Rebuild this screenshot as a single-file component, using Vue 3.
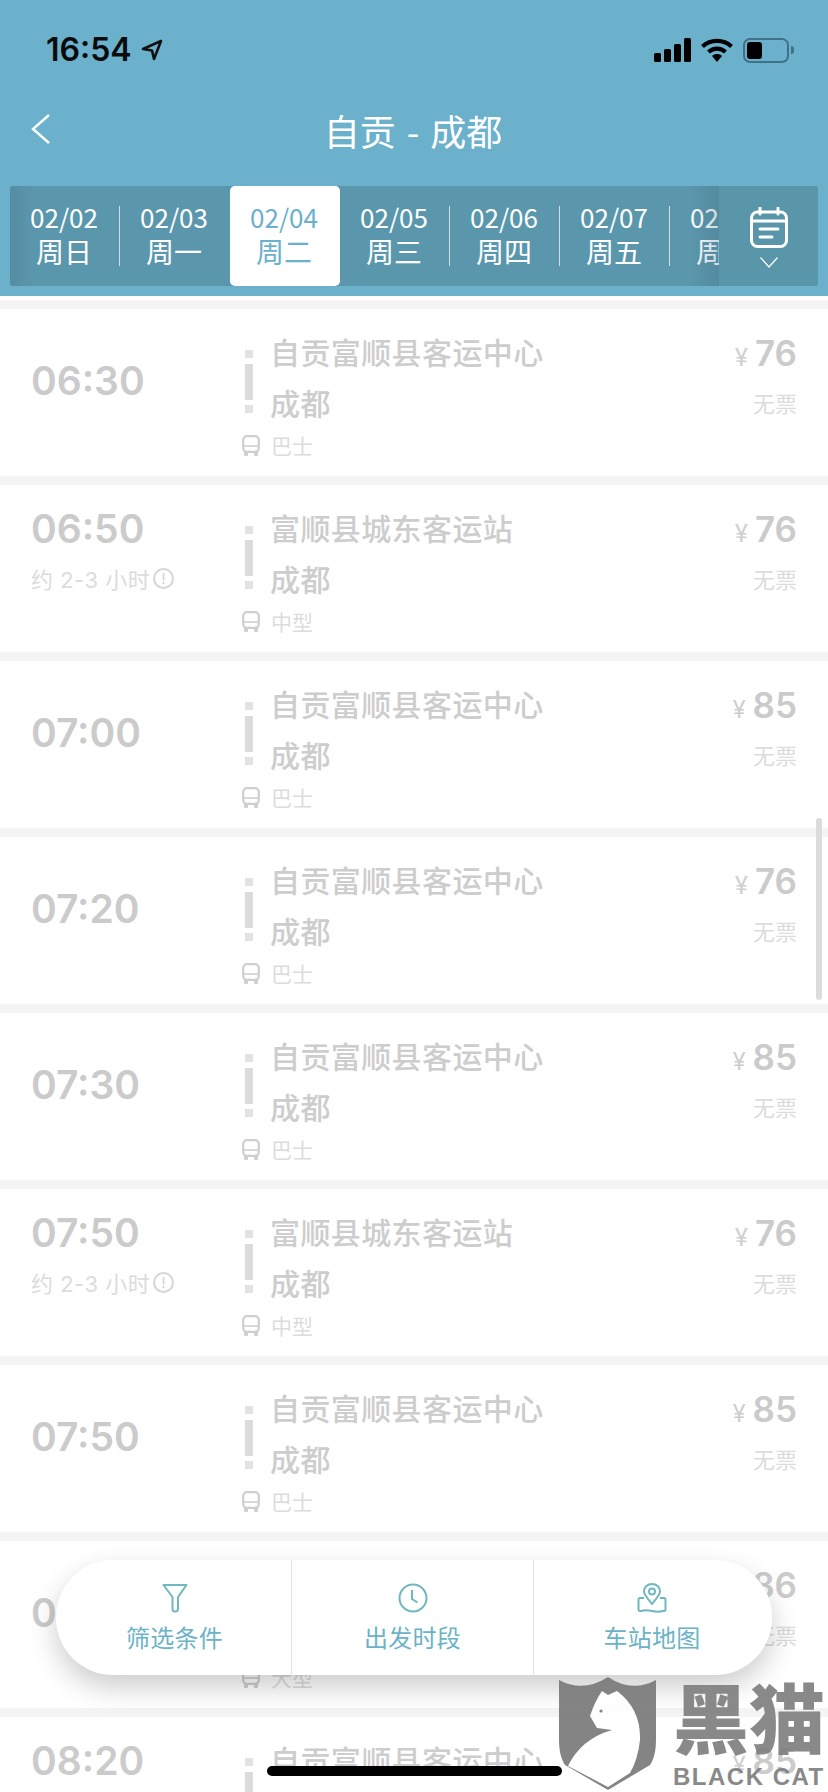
<script setup>
const MAIN = '自贡富顺县客运中心'
const EAST = '富顺县城东客运站'

const dates = [
  { date: '02/02', week: '周日' },
  { date: '02/03', week: '周一' },
  { date: '02/04', week: '周二', active: true },
  { date: '02/05', week: '周三' },
  { date: '02/06', week: '周四' },
  { date: '02/07', week: '周五' },
  { date: '02/08', week: '周六' }
]

const trips = [
  { time: '06:30', from: MAIN, price: 76, bus: '巴士' },
  { time: '06:50', from: EAST, price: 76, bus: '中型', sub: '约 2-3 小时' },
  { time: '07:00', from: MAIN, price: 85, bus: '巴士' },
  { time: '07:20', from: MAIN, price: 76, bus: '巴士' },
  { time: '07:30', from: MAIN, price: 85, bus: '巴士' },
  { time: '07:50', from: EAST, price: 76, bus: '中型', sub: '约 2-3 小时' },
  { time: '07:50', from: MAIN, price: 85, bus: '巴士' },
  { time: '08:00', from: MAIN, price: 86, bus: '大型' },
  { time: '08:20', from: MAIN, price: 85, bus: '巴士', sub: '约 2-3 小时' }
]
</script>

<template>
  <div class="page">
    <header class="header">
      <div class="status">
        <div class="status-left">
          <span class="clock">16:54</span>
          <svg class="nav-arrow" width="22" height="22" viewBox="0 0 22 22">
            <path d="M20 2 L2 10 L11 11.5 L13 20 Z" fill="none" stroke="#111" stroke-width="2.6" stroke-linejoin="round" />
          </svg>
        </div>
        <div class="status-right">
          <svg width="37" height="24" viewBox="0 0 37 24">
            <rect x="0" y="15" width="7" height="9" rx="1.5" fill="#000" />
            <rect x="10" y="11" width="7" height="13" rx="1.5" fill="#000" />
            <rect x="20" y="6" width="7" height="18" rx="1.5" fill="#000" />
            <rect x="30" y="0" width="7" height="24" rx="1.5" fill="#000" />
          </svg>
          <svg class="wifi" width="32" height="24" viewBox="0 0 32 24">
            <path d="M1.5 8.5 C9.5 1 22.5 1 30.5 8.5" fill="none" stroke="#000" stroke-width="4.2" />
            <path d="M7.5 14 C12.5 9.5 19.5 9.5 24.5 14" fill="none" stroke="#000" stroke-width="4.2" />
            <path d="M11 18 C14 15.4 18 15.4 21 18 L16 24 Z" fill="#000" />
          </svg>
          <div class="battery">
            <div class="battery-fill"></div>
          </div>
          <div class="battery-nub"></div>
        </div>
      </div>

      <div class="nav">
        <svg class="back" width="20" height="30" viewBox="0 0 20 30">
          <path d="M18 1 L2 15 L18 29" fill="none" stroke="#fff" stroke-width="2.4" />
        </svg>
        <div class="title">自贡 - 成都</div>
      </div>

      <div class="strip">
        <div
          v-for="(d, i) in dates"
          :key="d.date"
          class="tab"
          :class="{ active: d.active, 'no-line': i === 1 || d.active }"
        >
          <div class="tab-date">{{ d.date }}</div>
          <div class="tab-week">{{ d.week }}</div>
        </div>
        <div class="strip-edge"></div>
        <div class="calendar">
          <svg width="38" height="41" viewBox="0 0 38 41">
            <rect x="1.5" y="5" width="35" height="34.5" rx="6" fill="none" stroke="#fff" stroke-width="3" />
            <path d="M2 14 H36 M10 1 V7 M28 1 V7 M10 22 H28 M10 30 H22" fill="none" stroke="#fff" stroke-width="3" stroke-linecap="round" />
          </svg>
          <svg class="cal-chevron" width="18" height="11" viewBox="0 0 18 11">
            <path d="M0.5 0.5 L9 10 L17.5 0.5" fill="none" stroke="#fff" stroke-width="1.2" />
          </svg>
        </div>
      </div>
    </header>

    <main class="list">
      <section v-for="(t, i) in trips" :key="i" class="trip">
        <div class="time-col" :class="{ 'has-sub': t.sub }">
          <div class="time">{{ t.time }}</div>
          <div v-if="t.sub" class="duration">
            <span>{{ t.sub }}</span>
            <span class="info">!</span>
          </div>
        </div>
        <div class="mid">
          <div class="marker">
            <i class="dot"></i>
            <i class="bar"></i>
            <i class="dot"></i>
          </div>
          <div class="stations">
            <div class="station">{{ t.from }}</div>
            <div class="station second">成都</div>
          </div>
          <svg class="bus-icon" width="18" height="21" viewBox="0 0 18 21">
            <rect x="1.2" y="1.2" width="15.6" height="15.6" rx="3.5" fill="none" stroke="#cfcfcf" stroke-width="2.2" />
            <path d="M1 11 H17" stroke="#cfcfcf" stroke-width="1.6" />
            <rect x="2" y="16" width="4" height="5" rx="1" fill="#cfcfcf" />
            <rect x="12" y="16" width="4" height="5" rx="1" fill="#cfcfcf" />
          </svg>
          <div class="bus">{{ t.bus }}</div>
        </div>
        <div class="price-col">
          <div class="price"><span class="yen">¥</span>{{ t.price }}</div>
          <div class="sold">无票</div>
        </div>
      </section>
    </main>

    <div class="scrollbar"></div>

    <nav class="toolbar">
      <div class="tool first" style="width: 236px">
        <svg width="26" height="30" viewBox="0 0 26 30">
          <path d="M1.5 2 H24.5 L16 14 V26 Q16 28.5 13 28.5 Q10.5 28.5 10.5 26 V14 Z" fill="none" stroke="#6fb8c0" stroke-width="2" stroke-linejoin="round" />
        </svg>
        <span>筛选条件</span>
      </div>
      <div class="tool" style="width: 242px">
        <svg width="30" height="30" viewBox="0 0 30 30">
          <circle cx="15" cy="15" r="13.5" fill="none" stroke="#6fb8c0" stroke-width="2" />
          <path d="M14 7 V16 L19.5 19.5" fill="none" stroke="#6fb8c0" stroke-width="2" />
        </svg>
        <span>出发时段</span>
      </div>
      <div class="tool last">
        <svg width="30" height="30" viewBox="0 0 30 30">
          <path d="M15 21 C10 15 7 11.5 7 8.5 C7 4 10.5 1 15 1 C19.5 1 23 4 23 8.5 C23 11.5 20 15 15 21 Z" fill="none" stroke="#6fb8c0" stroke-width="2" stroke-linejoin="round" />
          <circle cx="15" cy="8.5" r="3" fill="none" stroke="#6fb8c0" stroke-width="2" />
          <path d="M7 15 H3 Q1.5 15 1.5 17 V26 Q1.5 28.5 4 28 Q9 26.5 15 28 Q21 29.5 26 28 Q28.5 28.5 28.5 26 V17 Q28.5 15 27 15 H23" fill="none" stroke="#6fb8c0" stroke-width="2" />
        </svg>
        <span>车站地图</span>
      </div>
    </nav>

    <div class="home-bar"></div>

    <div class="watermark">
      <svg width="97" height="113" viewBox="0 0 97 113">
        <path d="M0 3 Q24 16 49 0 Q73 16 97 3 V62 C97 74 95 82 91 88 L49 113 L6 88 C2 82 0 74 0 62 Z" fill="#7a7a7a" />
        <path d="M43 14 L49 18 L58 14 Q82 32 81 63 Q79 82 71 96 L49 110 L9 89 Q22 62 53 53 L38 51 L31 39 Q36 24 43 14 Z" fill="#fff" />
        <circle cx="42" cy="34" r="1.6" fill="#7a7a7a" />
      </svg>
      <div class="wm-text">
        <div class="wm-cn">黑猫</div>
        <div class="wm-en">BLACK CAT</div>
      </div>
    </div>
  </div>
</template>

<style>
html,
body {
  margin: 0;
  background: #fff;
}
</style>

<style scoped>
.page {
  position: relative;
  width: 828px;
  height: 1792px;
  overflow: hidden;
  background: #fff;
  font-family: "Noto Sans CJK SC", "Noto Sans", sans-serif;
}

.header {
  height: 296px;
  box-sizing: border-box;
  background: #6bb1cc;
  padding-top: 30px;
}

.status {
  display: flex;
  justify-content: space-between;
  align-items: center;
  height: 40px;
  padding: 0 34px 0 46px;
}

.status-left {
  display: flex;
  align-items: center;
  gap: 9px;
}

.clock {
  font-family: "Inter", sans-serif;
  font-size: 32px;
  font-weight: 600;
  color: #0b0b0b;
  line-height: 40px;
}

.status-right {
  display: flex;
  align-items: center;
}

.wifi {
  margin-left: 10px;
  margin-right: 10px;
}

.battery {
  width: 46px;
  height: 25px;
  box-sizing: border-box;
  border: 2px solid #3f7287;
  border-radius: 7px;
  padding: 2px;
}

.battery-fill {
  width: 15px;
  height: 100%;
  background: #000;
  border-radius: 3px;
}

.battery-nub {
  width: 3px;
  height: 8px;
  margin-left: 2px;
  background: #3f7287;
  border-radius: 0 3px 3px 0;
}

.nav {
  position: relative;
  height: 86px;
  margin-top: 20px;
  display: flex;
  align-items: center;
  justify-content: center;
}

.back {
  position: absolute;
  left: 31px;
  top: 24px;
}

.title {
  font-size: 36px;
  color: #fff;
  line-height: 46px;
  word-spacing: 3px;
  margin-bottom: 6px;
  margin-left: -2px;
}

.strip {
  position: relative;
  display: flex;
  height: 100px;
  margin: 10px 10px 0 10px;
  overflow: hidden;
  background: #5b97ac;
  border-radius: 3px;
}

.strip::before {
  content: "";
  position: absolute;
  left: 0;
  top: 0;
  bottom: 0;
  width: 24px;
  background: linear-gradient(to right, rgba(60, 100, 120, 0.2), rgba(60, 100, 120, 0));
}

.tab {
  position: relative;
  flex: 0 0 110px;
  height: 100px;
  box-sizing: border-box;
  padding-right: 2px;
  text-align: center;
  color: #fff;
}

.tab::after {
  content: "";
  position: absolute;
  right: 0;
  top: 20px;
  width: 1px;
  height: 60px;
  background: rgba(255, 255, 255, 0.7);
}

.tab.no-line::after {
  display: none;
}

.tab.active {
  background: #fff;
  border-radius: 5px;
  color: #6bb1cc;
  z-index: 1;
}

.tab-date {
  font-size: 26px;
  line-height: 30px;
  margin-top: 16px;
}

.tab-week {
  font-size: 28px;
  line-height: 36px;
  margin-top: 1px;
}

.strip-edge {
  position: absolute;
  right: 99px;
  top: 0;
  bottom: 0;
  width: 30px;
  background: linear-gradient(to right, rgba(60, 100, 120, 0), rgba(60, 100, 120, 0.25));
}

.calendar {
  position: absolute;
  right: 0;
  top: 0;
  bottom: 0;
  width: 99px;
  background: #5a96aa;
  display: flex;
  flex-direction: column;
  align-items: center;
  padding-top: 21px;
  box-sizing: border-box;
  z-index: 2;
}

.cal-chevron {
  margin-top: 9px;
}

.list {
  margin-top: 4px;
  padding-top: 9px;
  background: #f4f4f4;
  display: flex;
  flex-direction: column;
  gap: 9px;
}

.trip {
  display: flex;
  flex: 0 0 167px;
  height: 167px;
  padding: 0 31px;
  background: #fff;
}

.time-col {
  width: 211px;
  flex: none;
  padding-top: 47px;
  box-sizing: border-box;
}

.time-col.has-sub {
  padding-top: 19px;
}

.time {
  font-family: "Inter", sans-serif;
  font-weight: 600;
  font-size: 39px;
  line-height: 50px;
  color: #cbcbcb;
}

.duration {
  display: flex;
  align-items: center;
  margin-top: 9px;
  height: 30px;
  font-family: "Inter", "Noto Sans CJK SC", sans-serif;
  font-size: 22px;
  letter-spacing: 0.5px;
  color: #dcdcdc;
}

.info {
  display: inline-block;
  width: 17px;
  height: 17px;
  margin-left: 3px;
  border: 2px solid #d6d6d6;
  border-radius: 50%;
  font-size: 14px;
  line-height: 17px;
  text-align: center;
  color: #cfcfcf;
}

.mid {
  flex: 1;
  display: grid;
  grid-template-columns: 29px 1fr;
  grid-template-rows: 92px 30px;
  row-gap: 7px;
  padding-top: 22px;
  align-content: start;
}

.marker {
  display: flex;
  flex-direction: column;
  align-items: flex-start;
  padding: 19px 0 0 3px;
}

.marker .dot {
  width: 8px;
  height: 8px;
  background: #e2e2e2;
}

.marker .bar {
  width: 8px;
  height: 36px;
  margin: 6px 0 5px;
  background: #dcdcdc;
}

.station {
  font-size: 30px;
  font-weight: 500;
  letter-spacing: 0.4px;
  line-height: 40px;
  margin-left: -1px;
  color: #cdcdcd;
  white-space: nowrap;
}

.station.second {
  margin-top: 11px;
}

.bus-icon {
  align-self: center;
}

.bus {
  font-size: 21px;
  line-height: 30px;
  color: #dcdcdc;
}

.price-col {
  padding-top: 24px;
  text-align: right;
  flex: none;
}

.price {
  font-family: "Inter", sans-serif;
  font-weight: 600;
  font-size: 35px;
  line-height: 40px;
  height: 40px;
  color: #cbcbcb;
}

.yen {
  font-size: 24px;
  font-weight: 400;
  margin-right: 7px;
  color: #cfcfcf;
}

.sold {
  font-size: 22px;
  line-height: 40px;
  margin-top: 9px;
  color: #dcdcdc;
}

.scrollbar {
  position: absolute;
  left: 816px;
  top: 818px;
  width: 6px;
  height: 182px;
  border-radius: 3px;
  background: #dcdcdc;
}

.toolbar {
  position: absolute;
  left: 56px;
  top: 1560px;
  width: 716px;
  height: 115px;
  display: flex;
  background: #fff;
  border-radius: 57px;
  box-shadow: 0 12px 28px rgba(0, 0, 0, 0.2);
}

.tool {
  display: flex;
  flex-direction: column;
  align-items: center;
  padding-top: 23px;
  box-sizing: border-box;
  gap: 7px;
  border-right: 1px solid #e3e3e3;
  font-size: 24px;
  letter-spacing: 0.3px;
  line-height: 34px;
  color: #6bb3c6;
}

.tool.first {
  padding-left: 2px;
}

.tool.last {
  flex: 1;
  padding-right: 2px;
  border-right: none;
}

.home-bar {
  position: absolute;
  left: 267px;
  top: 1766px;
  width: 295px;
  height: 10px;
  border-radius: 5px;
  background: #000;
}

.watermark {
  position: absolute;
  left: 559px;
  top: 1677px;
  display: flex;
  gap: 17px;
  opacity: 0.92;
}

.wm-cn {
  font-weight: 900;
  font-size: 76px;
  line-height: 76px;
  color: #808080;
}

.wm-en {
  font-family: "Liberation Sans", sans-serif;
  font-weight: 700;
  font-size: 24px;
  letter-spacing: 1.5px;
  line-height: 24px;
  margin-top: 12px;
  color: #808080;
  white-space: nowrap;
}
</style>
